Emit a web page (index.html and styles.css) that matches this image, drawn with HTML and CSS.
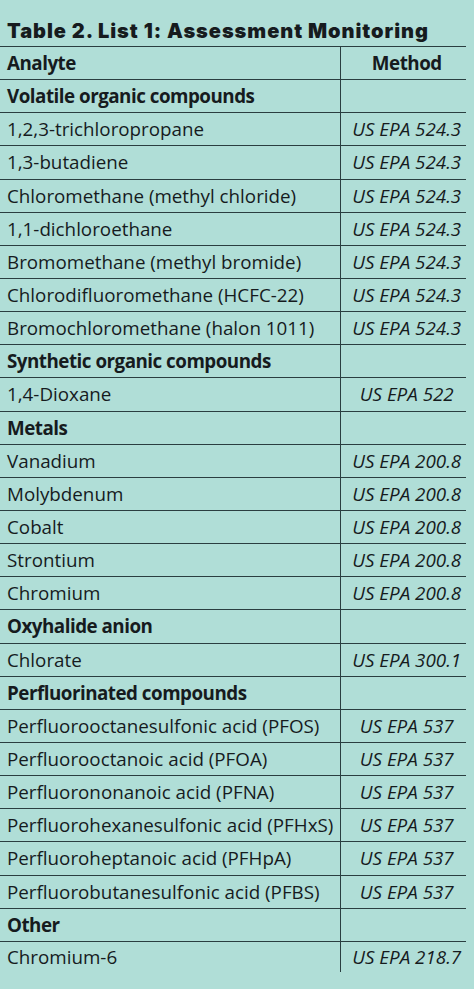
FILE: index.html
```
<!DOCTYPE html>
<html>
<head>
<meta charset="utf-8">
<link rel="stylesheet" href="styles.css">
</head>
<body>
<div class="page">
  <h1 class="title">Table 2. List 1: Assessment Monitoring</h1>
  <table class="list">
    <tr class="head"><td class="a">Analyte</td><td class="m">Method</td></tr>
    <tr class="group"><td class="a">Volatile organic compounds</td><td class="m"></td></tr>
    <tr><td class="a">1,2,3-trichloropropane</td><td class="m">US EPA 524.3</td></tr>
    <tr><td class="a">1,3-butadiene</td><td class="m">US EPA 524.3</td></tr>
    <tr><td class="a">Chloromethane (methyl chloride)</td><td class="m">US EPA 524.3</td></tr>
    <tr><td class="a">1,1-dichloroethane</td><td class="m">US EPA 524.3</td></tr>
    <tr><td class="a">Bromomethane (methyl bromide)</td><td class="m">US EPA 524.3</td></tr>
    <tr><td class="a">Chlorodifluoromethane (HCFC-22)</td><td class="m">US EPA 524.3</td></tr>
    <tr><td class="a">Bromochloromethane (halon 1011)</td><td class="m">US EPA 524.3</td></tr>
    <tr class="group"><td class="a">Synthetic organic compounds</td><td class="m"></td></tr>
    <tr><td class="a">1,4-Dioxane</td><td class="m">US EPA 522</td></tr>
    <tr class="group"><td class="a">Metals</td><td class="m"></td></tr>
    <tr><td class="a">Vanadium</td><td class="m">US EPA 200.8</td></tr>
    <tr><td class="a">Molybdenum</td><td class="m">US EPA 200.8</td></tr>
    <tr><td class="a">Cobalt</td><td class="m">US EPA 200.8</td></tr>
    <tr><td class="a">Strontium</td><td class="m">US EPA 200.8</td></tr>
    <tr><td class="a">Chromium</td><td class="m">US EPA 200.8</td></tr>
    <tr class="group"><td class="a">Oxyhalide anion</td><td class="m"></td></tr>
    <tr><td class="a">Chlorate</td><td class="m">US EPA 300.1</td></tr>
    <tr class="group"><td class="a">Perfluorinated compounds</td><td class="m"></td></tr>
    <tr><td class="a">Perfluorooctanesulfonic acid (PFOS)</td><td class="m">US EPA 537</td></tr>
    <tr><td class="a">Perfluorooctanoic acid (PFOA)</td><td class="m">US EPA 537</td></tr>
    <tr><td class="a">Perfluorononanoic acid (PFNA)</td><td class="m">US EPA 537</td></tr>
    <tr><td class="a">Perfluorohexanesulfonic acid (PFHxS)</td><td class="m">US EPA 537</td></tr>
    <tr><td class="a">Perfluoroheptanoic acid (PFHpA)</td><td class="m">US EPA 537</td></tr>
    <tr><td class="a">Perfluorobutanesulfonic acid (PFBS)</td><td class="m">US EPA 537</td></tr>
    <tr class="group"><td class="a">Other</td><td class="m"></td></tr>
    <tr class="last"><td class="a">Chromium-6</td><td class="m">US EPA 218.7</td></tr>
  </table>
</div>
</body>
</html>
```
FILE: styles.css
```
html, body {
  margin: 0;
  padding: 0;
  background: #b0ded7;
}
.page {
  width: 474px;
  height: 989px;
  background: #b0ded7;
  color: #161b1e;
  font-family: "Open Sans", "DejaVu Sans Condensed", sans-serif;
  font-stretch: 88%;
}
.title {
  margin: 0;
  height: 46px;
  box-sizing: border-box;
  padding: 19px 0 0 7px;
  font-family: "Inter", "DejaVu Sans", sans-serif;
  font-stretch: normal;
  font-weight: 900;
  font-size: 20px;
  line-height: 24px;
  letter-spacing: 0.95px;
  white-space: nowrap;
}
.list {
  width: 466px;
  border-collapse: collapse;
  table-layout: fixed;
  font-size: 18.8px;
}
.list td {
  height: 33.15px;
  padding: 0;
  box-sizing: border-box;
  border-top: 1.5px solid #2a3e40;
  vertical-align: middle;
  line-height: 22px;
  white-space: nowrap;
}
.list td.a {
  width: 340px;
  padding-left: 7px;
  border-right: 1.5px solid #2a3e40;
}
.list td.m {
  text-align: center;
  font-style: italic;
  padding-left: 7px;
}
.list .head td, .list .group td {
  font-weight: bold;
  letter-spacing: -0.5px;
}
.list .head td.m {
  font-style: normal;
}
.list .last td {
  height: 31px;
}
```
